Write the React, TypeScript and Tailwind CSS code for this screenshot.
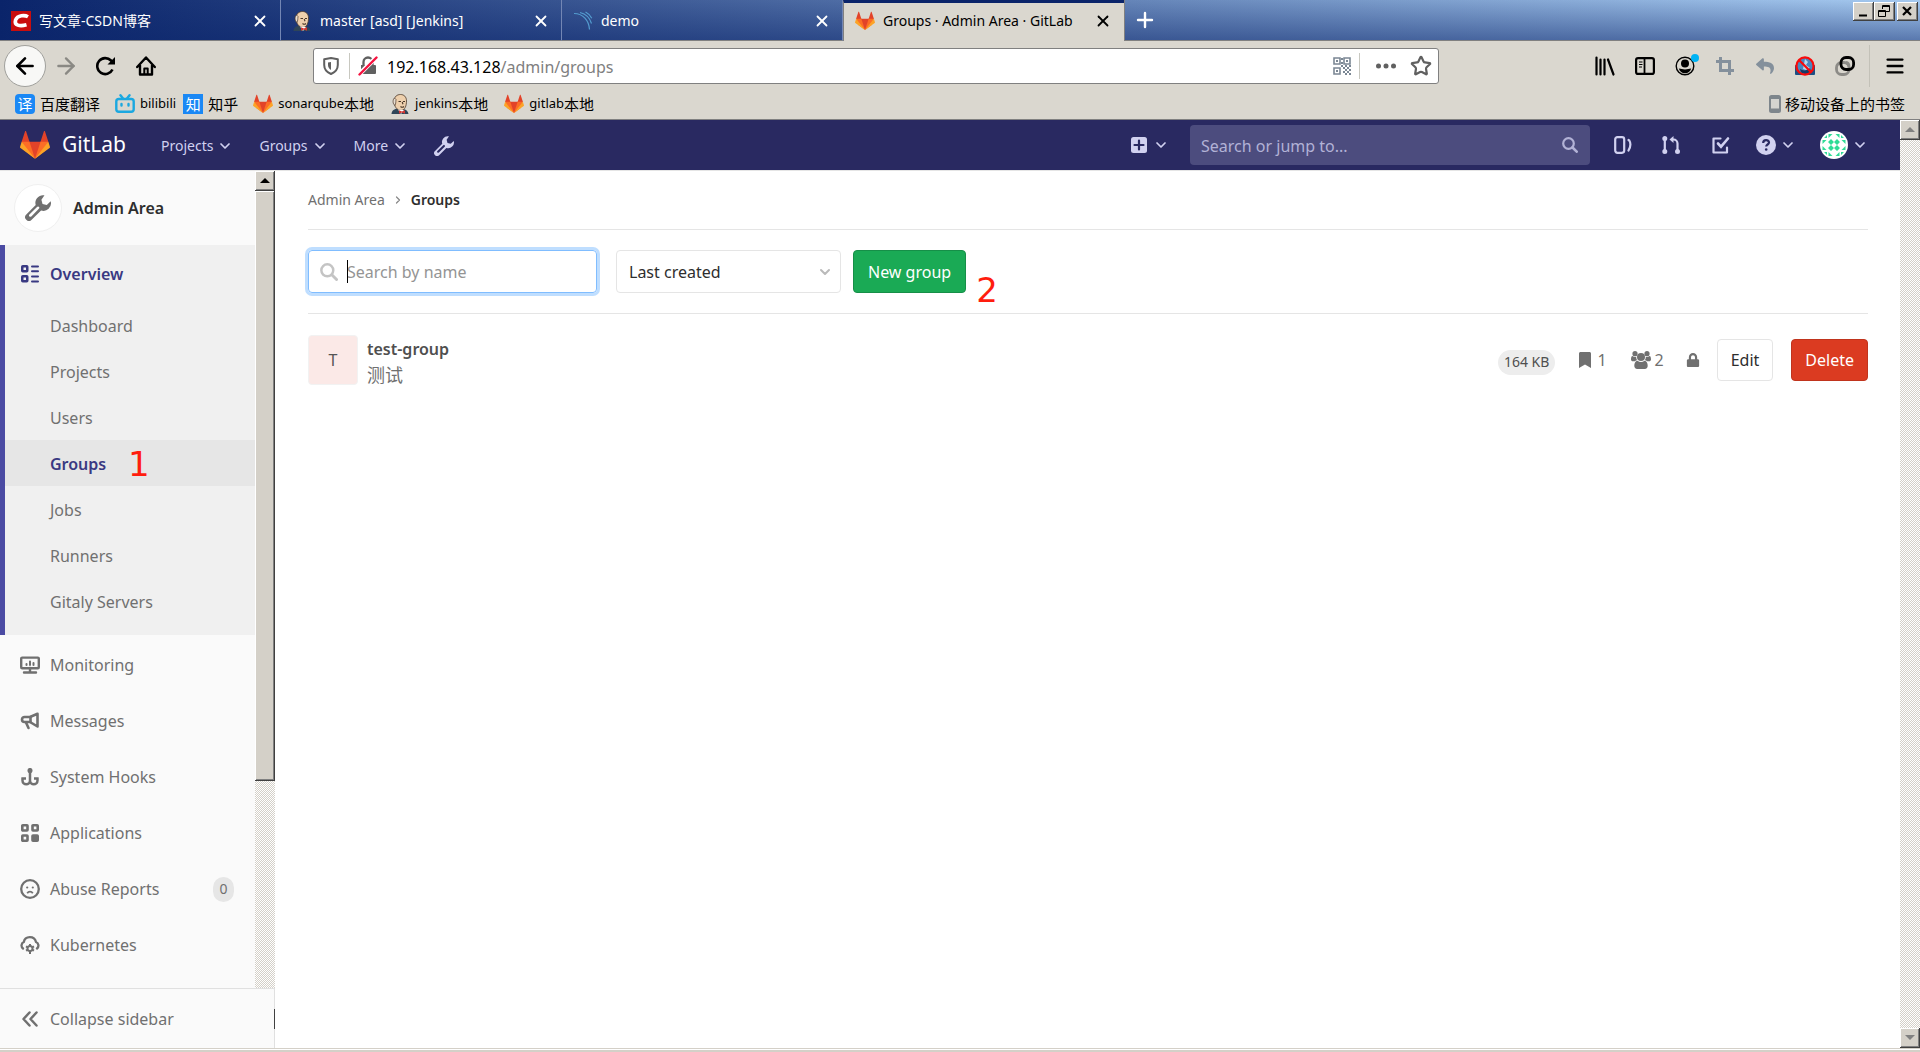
import type { ReactNode } from 'react';
import { ArrowLeft, ArrowRight, ChevronDown, ChevronRight, Menu, Plus, Star, X } from 'lucide-react';
import { FaBookmark, FaLock, FaReply } from 'react-icons/fa';

const OVERVIEW_LINKS = ['Dashboard', 'Projects', 'Users', 'Groups', 'Jobs', 'Runners', 'Gitaly Servers'];

const NAV_LINKS = ['Projects', 'Groups', 'More'];

function Tanuki({ className }: { className: string }) {
  return (
    <svg viewBox="0 0 36 36" className={className} preserveAspectRatio="none" aria-hidden="true">
      <path fill="#e24329" d="M2 14l9.38 9v-9l-4-12.28c-.205-.632-1.176-.632-1.38 0z" />
      <path fill="#e24329" d="M34 14l-9.38 9v-9l4-12.28c.205-.632 1.176-.632 1.38 0z" />
      <path fill="#e24329" d="M18 34.38L3 14h30z" />
      <path fill="#fc6d26" d="M18 34.38L11.38 14H2l4 11z" />
      <path fill="#fc6d26" d="M18 34.38L24.62 14H34l-4 11z" />
      <path fill="#fca326" d="M2 14L.1 20.16c-.18.565 0 1.2.5 1.56L18 34.38z" />
      <path fill="#fca326" d="M34 14l1.9 6.16c.18.565 0 1.2-.5 1.56L18 34.38z" />
    </svg>
  );
}

function JenkinsIcon() {
  return (
    <svg viewBox="0 0 20 20" className="size-5 shrink-0" aria-hidden="true">
      <path fill="#2f4558" d="M1.500 20c0-3 2.500-5 5.500-5.500l6 .5c3 .5 5 2 5.500 5z" />
      <path fill="#eed0ad" stroke="#4a3728" strokeWidth=".8" d="M4 6.500C4.500 2.500 7 .5 10.500.5s6 2.300 6 6.500c0 5-1.700 9-5 9.300C7.500 16.500 5 13.500 4.500 10z" />
      <path fill="#e6dcd0" stroke="#4a3728" strokeWidth=".7" d="M4.500 4C2.500 5.500 2.500 10 5 11.500c.8-1.500.8-3.500 1-6z" />
      <path fill="none" stroke="#4a3728" strokeWidth="1.100" d="M8.500 7.500h2.500M13 7.500h2M10.500 12.500c1 .8 2.500.8 3.500 0M12.200 8l.8 2.200" />
      <path fill="#fff" d="M8 15.500l3 4.500 3-4z" />
      <path fill="#d33833" d="M9 16.300l3 1.200 3-1.200v3.500l-3-1.200-3 1.200z" />
    </svg>
  );
}

function CsdnIcon() {
  return (
    <svg viewBox="0 0 20 20" className="size-5 shrink-0" aria-hidden="true">
      <rect width="20" height="20" fill="#c90d0d" />
      <path d="M17 5.700c-3-1.700-10.500-2-12.500 3.500-1.500 5 4 6.500 11 4.600" fill="none" stroke="#fff" strokeWidth="3.600" />
    </svg>
  );
}

function SonarIcon() {
  return (
    <svg viewBox="0 0 20 20" className="size-5 shrink-0" fill="none" stroke="#549dd0" strokeWidth="1.200" aria-hidden="true">
      <path d="M1 2.500c9 0 15 7 15.500 16" />
      <path d="M7 1.500c6 1.500 10 6 11.500 11" />
      <path d="M12.500 1c3 1.500 5 3.500 6.300 6.200" />
    </svg>
  );
}

function SearchIcon({ className }: { className: string }) {
  return (
    <svg viewBox="0 0 16 16" className={className} fill="none" stroke="currentColor" aria-hidden="true">
      <circle cx="6.500" cy="6.500" r="5.300" strokeWidth="2.200" />
      <path d="M10.500 10.500l4.200 4.200" strokeWidth="2.600" strokeLinecap="round" />
    </svg>
  );
}

function Wrench({ className }: { className: string }) {
  return (
    <svg viewBox="0 0 16 16" className={className} fill="currentColor" aria-hidden="true">
      <path
        fillRule="evenodd"
        d="M11.300.2a4.600 4.600 0 0 0-4.700 6L.8 12a2.300 2.300 0 0 0 3.300 3.300l5.800-5.800a4.600 4.600 0 0 0 5.900-5.600l-2.400 2.300-2.600-.6-.7-2.700L12 .2zM8.500 7.300a.8.800 0 0 1 0 1.200L3.900 13.200a.85.85 0 0 1-1.200-1.200l4.700-4.600a.8.800 0 0 1 1.100-.1z"
      />
    </svg>
  );
}

function OverviewIcon() {
  return (
    <svg viewBox="0 0 18 18" className="size-[18px]" fill="none" stroke="currentColor" strokeWidth="2.500" aria-hidden="true">
      <rect x="1.250" y="1.250" width="5" height="5" rx=".5" />
      <rect x="1.250" y="11.250" width="5" height="5" rx=".5" />
      <path strokeWidth="2" strokeLinecap="round" d="M11 1.500h6M11 6.200h6M11 11.500h6M11 16.500h6" />
    </svg>
  );
}

function MonitorIcon() {
  return (
    <svg viewBox="0 0 20 18" className="h-[18px] w-5" fill="none" stroke="currentColor" strokeWidth="2.400" aria-hidden="true">
      <rect x="1.200" y="1.600" width="17.600" height="10.600" rx="1" />
      <path d="M10 12v4M4 16.500h12" strokeLinecap="round" />
      <path d="M6.500 8v1M10 5.500v3.500M13.500 7v2" strokeWidth="2" strokeLinecap="round" />
    </svg>
  );
}

function MessagesIcon() {
  return (
    <svg viewBox="0 0 20 18" className="h-[18px] w-5" fill="none" stroke="currentColor" strokeWidth="2.600" strokeLinejoin="round" aria-hidden="true">
      <path d="M10 5H4.500a2.500 2.500 0 0 0 0 5H10l7.500 4.500V1.800z" />
      <path d="M10.500 5v5M6 10.500l2.500 5.500" strokeLinecap="round" />
    </svg>
  );
}

function HookIcon() {
  return (
    <svg viewBox="0 0 18 18" className="size-[18px]" fill="none" stroke="currentColor" strokeWidth="2.500" aria-hidden="true">
      <circle cx="9" cy="2.500" r="1.300" fill="currentColor" />
      <path d="M9 3v11M9 12.500c0 5-7.500 5-7.500 0V9.500M9 12.500c0 5 7.500 5 7.500 0V9.500M.5 10.500h4.500M13 10.500h4.500" />
    </svg>
  );
}

function AppsIcon() {
  return (
    <svg viewBox="0 0 18 18" className="size-[18px]" fill="none" stroke="currentColor" strokeWidth="2.600" aria-hidden="true">
      <rect x="1.300" y="1.300" width="5.200" height="5.200" rx=".5" />
      <rect x="11.500" y="1.300" width="5.200" height="5.200" rx=".5" />
      <rect x="1.300" y="11.500" width="5.200" height="5.200" rx=".5" />
      <rect x="11.500" y="11.500" width="5.200" height="5.200" rx=".5" fill="currentColor" />
    </svg>
  );
}

function AbuseIcon() {
  return (
    <svg viewBox="0 0 20 20" className="size-5" fill="none" stroke="currentColor" strokeWidth="2.300" aria-hidden="true">
      <circle cx="10" cy="10" r="8.800" />
      <path d="M7.200 14.300c1.400-2.200 4.200-2.200 5.600 0" strokeWidth="1.800" />
      <circle cx="7.200" cy="8.500" r="1.100" fill="currentColor" stroke="none" />
      <circle cx="12.800" cy="8.500" r="1.100" fill="currentColor" stroke="none" />
    </svg>
  );
}

function KubernetesIcon() {
  return (
    <svg viewBox="0 0 20 18" className="h-[18px] w-5" fill="none" stroke="currentColor" strokeWidth="2.300" aria-hidden="true">
      <path d="M3 12.500A3.800 3.800 0 0 1 3.800 6C5-.3 14.500-.5 16 6a3.800 3.800 0 0 1 1 6.500" strokeLinecap="round" />
      <circle cx="10" cy="12.500" r="2.500" strokeWidth="2" />
      <path strokeWidth="2" d="M10 8v2M10 15v3M6 10.300l1.800 1M14 10.300l-1.800 1M6 14.700l1.800-1M14 14.700l-1.800-1" />
    </svg>
  );
}

function MembersIcon() {
  return (
    <svg viewBox="0 0 20 18" className="h-[18px] w-5" fill="currentColor" aria-hidden="true">
      <circle cx="10" cy="6" r="4" />
      <path d="M6.500 9.800c1 .8 2.200 1.200 3.500 1.200s2.500-.4 3.500-1.200c2.300.2 3.200 2.500 3.200 5 0 2-1 3.200-3 3.200H6.300c-2 0-3-1.200-3-3.200 0-2.500.9-4.800 3.200-5z" />
      <circle cx="4" cy="2.700" r="2.600" />
      <circle cx="16" cy="2.700" r="2.600" />
      <path d="M1.500 5c1.300 1 2.500 1.100 3.700.7 0 1.500.3 2.600 1 3.500-1 .1-1.700.4-2.200 1H2C.8 10.200 0 9.600 0 8.400 0 6.800.4 5 1.500 5zM18.500 5c-1.300 1-2.500 1.100-3.700.7 0 1.500-.3 2.600-1 3.500 1 .1 1.700.4 2.200 1h2c1.200 0 2-.6 2-1.800 0-1.600-.4-3.400-1.500-3.400z" />
    </svg>
  );
}

const SIDEBAR_LINKS: { label: string; icon: ReactNode; badge?: string }[] = [
  { label: 'Monitoring', icon: <MonitorIcon /> },
  { label: 'Messages', icon: <MessagesIcon /> },
  { label: 'System Hooks', icon: <HookIcon /> },
  { label: 'Applications', icon: <AppsIcon /> },
  { label: 'Abuse Reports', icon: <AbuseIcon />, badge: '0' },
  { label: 'Kubernetes', icon: <KubernetesIcon /> },
];

const TABS: { title: string; icon: ReactNode; active?: boolean }[] = [
  { title: '写文章-CSDN博客', icon: <CsdnIcon /> },
  { title: 'master [asd] [Jenkins]', icon: <JenkinsIcon /> },
  { title: 'demo', icon: <SonarIcon /> },
  { title: 'Groups · Admin Area · GitLab', icon: <Tanuki className="size-5 shrink-0" />, active: true },
];

function TabStrip() {
  return (
    <div className="flex h-[41px] items-stretch bg-[linear-gradient(to_bottom,transparent,rgba(10,36,106,0.5)),linear-gradient(to_right,#0a246a,#a6caf0)]">
      {TABS.map((tab) => (
        <div
          key={tab.title}
          className={`flex w-[281px] items-center pl-[11px] text-sm ${
            tab.active
              ? 'border-l border-t-[3px] border-l-[#808080] border-t-[#0a246a] bg-[#dad7cf] pb-0.5 pr-[7px] text-black'
              : 'border-b border-r border-b-[#808080] border-r-[#7386b4] pr-1.5 pt-0.5 text-white'
          }`}
        >
          {tab.icon}
          <span className="ml-2 flex-1 truncate">{tab.title}</span>
          <button aria-label="Close tab" className="flex size-7 items-center justify-center">
            <X size={18} strokeWidth={2.4} />
          </button>
        </div>
      ))}
      <div className="flex flex-1 items-start border-b border-l border-[#808080]">
        <button aria-label="New tab" className="flex h-10 w-10 items-center justify-center text-white">
          <Plus size={24} strokeWidth={2.4} />
        </button>
        <div className="ml-auto mr-0.5 mt-0.5 flex text-black">
          <button aria-label="Minimize" className="flex h-[19px] w-[21px] items-center justify-center border-b border-r border-[#404040] bg-[#d4d0c8] shadow-[inset_1px_1px_0_#fff,inset_-1px_-1px_0_#808080]">
            <svg viewBox="0 0 12 12" className="size-3"><path d="M2 10.500h8" stroke="currentColor" strokeWidth="2" /></svg>
          </button>
          <button aria-label="Restore" className="flex h-[19px] w-[21px] items-center justify-center border-b border-r border-[#404040] bg-[#d4d0c8] shadow-[inset_1px_1px_0_#fff,inset_-1px_-1px_0_#808080]">
            <svg viewBox="0 0 12 12" className="size-3" fill="none" stroke="currentColor">
              <path d="M4.500 4V.5h7v6H8M4 1.500h8M.5 5.500h7v6h-7zM0 6.500h8" />
            </svg>
          </button>
          <button aria-label="Close" className="ml-0.5 flex h-[19px] w-[21px] items-center justify-center border-b border-r border-[#404040] bg-[#d4d0c8] shadow-[inset_1px_1px_0_#fff,inset_-1px_-1px_0_#808080]">
            <svg viewBox="0 0 12 12" className="size-3"><path d="M2 2l8 8M10 2l-8 8" stroke="currentColor" strokeWidth="2.200" /></svg>
          </button>
        </div>
      </div>
    </div>
  );
}

function UrlBar() {
  return (
    <div className="flex h-9 min-w-0 flex-1 items-center rounded-[3px] border border-[#808080] bg-white text-[#606060]">
      <svg viewBox="0 0 16 18" className="ml-[9px] h-[18px] w-4" fill="none" stroke="currentColor" strokeWidth="2" aria-hidden="true">
        <path d="M8 1l6.800 1.300V8c0 4.500-2.800 7.300-6.800 9-4-1.700-6.800-4.500-6.800-9V2.300z" strokeLinejoin="round" />
        <path d="M8 5v8c-2-1.300-3-3-3-5V5.500z" fill="currentColor" stroke="none" />
      </svg>
      <span className="ml-2.5 h-[26px] w-px bg-[#c8c8c0]" />
      <svg viewBox="0 0 20 20" className="ml-2 size-5" aria-hidden="true">
        <path fill="currentColor" d="M3 9h14a1 1 0 0 1 1 1v7a1 1 0 0 1-1 1H3z" />
        <path d="M5.500 9V6a4.500 4.500 0 0 1 9 0v3" fill="none" stroke="currentColor" strokeWidth="2.300" />
        <path d="M1 18.500L18.500 1" stroke="#fff" strokeWidth="4.500" />
        <path d="M1.500 18.500L18.500 1.500" stroke="#f5123f" strokeWidth="2.400" strokeLinecap="round" />
      </svg>
      <div className="ml-[9px] flex-1 pt-0.5 text-base text-[#808080]">
        <span className="text-black">192.168.43.128</span>/admin/groups
      </div>
      <svg viewBox="0 0 18 18" className="size-[18px]" fill="none" stroke="#7b8794" strokeWidth="1.600" aria-hidden="true">
        <path d="M1 1h6v6H1zM11 1h6v6h-6zM1 11h6v6H1z" />
        <path strokeWidth="2" d="M3 4h2M13 4h2M3 14h2M8 9h2M12 9h2M16 9h2M10 11h2M14 11h2M12 13h2M16 13h2M10 15h2M14 15h2M12 17h2M16 17h2M8 2h2M8 6h2" />
      </svg>
      <span className="ml-2 h-[26px] w-px bg-[#c8c8c0]" />
      <button aria-label="Page actions" className="ml-4 flex w-5 justify-center">
        <svg viewBox="0 0 20 6" className="h-1.5 w-5" fill="currentColor">
          <circle cx="2.500" cy="3" r="2.500" /><circle cx="10" cy="3" r="2.500" /><circle cx="17.500" cy="3" r="2.500" />
        </svg>
      </button>
      <button aria-label="Bookmark this page" className="ml-3.5 mr-1.5">
        <Star size={22} strokeWidth={2.4} />
      </button>
    </div>
  );
}

function Toolbar() {
  return (
    <div className="flex h-[50px] items-center bg-[#dad7cf] pl-1 text-black">
      <button aria-label="Back" className="flex size-[42px] items-center justify-center rounded-full border border-[#a0a09c] bg-[#f8f8f6]">
        <ArrowLeft size={26} strokeWidth={2.4} />
      </button>
      <button aria-label="Forward" className="flex w-10 justify-center text-[#8a8984]">
        <ArrowRight size={26} strokeWidth={2.2} />
      </button>
      <button aria-label="Reload" className="flex w-10 justify-center">
        <svg viewBox="0 0 20 20" className="size-5" fill="none" stroke="currentColor" strokeWidth="2.600">
          <path d="M16.500 13.500A8 8 0 1 1 15 4.500l1.500 2" />
          <path d="M19 1v7.500h-7.500z" fill="currentColor" stroke="none" />
        </svg>
      </button>
      <button aria-label="Home" className="flex w-10 justify-center">
        <svg viewBox="0 0 20 20" className="size-5" fill="none" stroke="currentColor" strokeWidth="2.400" strokeLinejoin="round" strokeLinecap="round">
          <path d="M1.200 11L10 1.500l8.800 9.500M4 9.500v9h12v-9" />
          <path d="M8.300 18v-5.500h3.400V18" strokeWidth="2" />
        </svg>
      </button>
      <div className="ml-[147px] flex min-w-0 flex-1">
        <UrlBar />
      </div>
      <div className="ml-[146px] flex items-center">
        <button aria-label="Library" className="flex w-10 justify-center">
          <svg viewBox="0 0 20 20" className="size-5" stroke="currentColor" strokeWidth="2.200" strokeLinecap="round">
            <path d="M1.500 1.500v17M5.500 3.500v15M9.500 3.500v15M13 3.500l5.500 15" />
          </svg>
        </button>
        <button aria-label="Sidebars" className="flex w-10 justify-center">
          <svg viewBox="0 0 20 18" className="h-[18px] w-5" fill="none" stroke="currentColor" strokeWidth="2.200">
            <rect x="1.100" y="1.100" width="17.800" height="15.800" rx="2" />
            <path d="M9.500 1v16" strokeWidth="1.800" />
            <path d="M4 5h3.500M4 7.500h3.500M4 10h3" strokeWidth="1.200" />
          </svg>
        </button>
        <button aria-label="Account" className="relative flex w-10 justify-center">
          <svg viewBox="0 0 20 20" className="size-5" fill="currentColor">
            <circle cx="10" cy="10" r="8.800" fill="none" stroke="currentColor" strokeWidth="1.400" />
            <circle cx="10" cy="7.500" r="4" />
            <path d="M3.800 12.500c2.500.2 3.500 1 6.200 1s3.700-.8 6.200-1c-.8 3-3.200 4.700-6.200 4.700s-5.400-1.700-6.200-4.700z" />
          </svg>
          <span className="absolute -top-0.5 right-1.5 size-2 rounded-full bg-[#00b3f4]" />
        </button>
        <button aria-label="Crop" className="flex w-10 justify-center text-[#84909c]">
          <svg viewBox="0 0 20 20" className="size-5" fill="none" stroke="currentColor" strokeWidth="3">
            <path d="M5.500 1v13.500H19M1 5.500h13.500V19" />
          </svg>
        </button>
        <button aria-label="Undo" className="flex w-10 justify-center text-[#84909c]">
          <FaReply size={18} />
        </button>
        <button aria-label="Blocked images" className="flex w-10 justify-center">
          <svg viewBox="0 0 20 20" className="size-5">
            <rect y="9" width="20" height="10" rx="1" fill="#1d4f84" />
            <circle cx="10" cy="10" r="8.600" fill="#4a86bd" />
            <path d="M5 13c3 2 7 2 10-1l1 4-5 2.500-5-2z" fill="#173a66" />
            <path d="M10 3l3 3-2 3 4 3-4 2-3-1z" fill="#b9d8ec" />
            <circle cx="10" cy="10" r="8.600" fill="none" stroke="#fa0a0a" strokeWidth="2.200" />
            <path d="M4 4l12 12" stroke="#fa0a0a" strokeWidth="2.200" />
          </svg>
        </button>
        <button aria-label="Copy links" className="flex w-10 justify-center">
          <svg viewBox="0 0 20 20" className="size-5" fill="none" strokeWidth="2.800">
            <rect x="1.500" y="6.500" width="12.500" height="12" rx="5" stroke="#8c8b87" />
            <rect x="6" y="1.500" width="12.600" height="12" rx="5" stroke="currentColor" />
            <path d="M14 10.500c0-2.500-1-3.700-3-4" stroke="#8c8b87" />
          </svg>
        </button>
        <span className="ml-1 h-[42px] w-px bg-[#c3c1b8]" />
        <button aria-label="Open menu" className="flex w-[50px] justify-center">
          <Menu size={22} strokeWidth={2.6} />
        </button>
      </div>
    </div>
  );
}

function Bookmarks() {
  return (
    <div className="flex h-[29px] items-center border-b border-[#808080] bg-[#dad7cf] pb-0.5 pl-[15px] pr-[15px] text-[13px] text-black">
      <a href="#" className="flex items-center text-[15px]">
        <span className="mr-[5px] flex size-5 items-center justify-center rounded-sm bg-[#1a88f5] text-white">译</span>
        百度翻译
      </a>
      <a href="#" className="ml-[15px] flex items-center">
        <svg viewBox="0 0 20 20" className="mr-[5px] size-5" fill="none" stroke="#1ba8e0" strokeWidth="2.400" strokeLinecap="round" aria-hidden="true">
          <rect x="1.300" y="5" width="17.400" height="12.800" rx="2.500" />
          <path d="M5.500 1.300L8 4.500M14.500 1.300L12 4.500M6.500 10v1.500M13.500 10v1.500" />
        </svg>
        bilibili
      </a>
      <a href="#" className="ml-[7px] flex items-center text-[15px]">
        <span className="mr-[5px] flex size-5 items-center justify-center bg-[#1a88f5] text-white">知</span>
        知乎
      </a>
      <a href="#" className="ml-[15px] flex items-center">
        <Tanuki className="mr-[5px] size-5" />
        sonarqube<span className="text-[15px]">本地</span>
      </a>
      <a href="#" className="ml-4 flex items-center">
        <span className="mr-[5px]"><JenkinsIcon /></span>
        jenkins<span className="text-[15px]">本地</span>
      </a>
      <a href="#" className="ml-4 flex items-center">
        <Tanuki className="mr-[5px] size-5" />
        gitlab<span className="text-[15px]">本地</span>
      </a>
      <a href="#" className="ml-auto flex items-center text-[15px]">
        <svg viewBox="0 0 12 18" className="mr-1 h-[18px] w-3" fill="none" stroke="#7e868c" aria-hidden="true">
          <rect x="1" y="1" width="10" height="16" rx="1.500" strokeWidth="2" fill="#d4d4d0" />
          <path d="M1 2.500h10M1 15h10" strokeWidth="3" />
        </svg>
        移动设备上的书签
      </a>
    </div>
  );
}

function Navbar() {
  return (
    <header className="flex h-[50px] items-center bg-[#292961] pl-5 text-[#d1d1f0]">
      <a href="#" className="flex items-center text-[21px] text-white">
        <Tanuki className="mr-3 h-[30px] w-[30px]" />
        GitLab
      </a>
      <nav className="ml-[35px] flex items-center gap-[26px] pt-px text-sm">
        {NAV_LINKS.map((label) => (
          <a key={label} href="#" className="flex items-center gap-1">
            {label}
            <ChevronDown size={16} strokeWidth={2.6} />
          </a>
        ))}
        <a href="#" aria-label="Admin Area">
          <Wrench className="size-5" />
        </a>
      </nav>
      <button aria-label="New" className="ml-auto flex items-center gap-1.5">
        <svg viewBox="0 0 16 16" className="size-4">
          <rect width="16" height="16" rx="2.500" fill="currentColor" />
          <path d="M8 3.500v9M3.500 8h9" stroke="#292961" strokeWidth="2.200" strokeLinecap="round" />
        </svg>
        <ChevronDown size={16} strokeWidth={2.6} />
      </button>
      <div className="ml-[21px] flex h-10 w-[400px] items-center rounded bg-[#4c4c7e] pl-[11px] pr-3">
        <input
          aria-label="Search or jump to"
          placeholder="Search or jump to..."
          className="min-w-0 flex-1 bg-transparent pt-0.5 text-base outline-none placeholder:text-[#b2b2d6]"
        />
        <SearchIcon className="size-4 text-[#b2b2d6]" />
      </div>
      <a href="#" aria-label="Issues" className="ml-6">
        <svg viewBox="0 0 18 18" className="size-[18px]" fill="none" stroke="currentColor" strokeWidth="2.200" strokeLinecap="round">
          <rect x="1.200" y="1.200" width="9" height="15.600" rx="2.200" />
          <path d="M14.500 4l.8.500c1.500 2.500 1.200 6.500-.8 10" />
        </svg>
      </a>
      <a href="#" aria-label="Merge requests" className="ml-[30px]">
        <svg viewBox="0 0 18 18" className="size-[18px]" fill="none" stroke="currentColor" strokeWidth="2.200">
          <path d="M2.800 2v14M9.500 3.500h2a4 4 0 0 1 4 4V16" />
          <path d="M11.500 0v7L7.500 3.500z" fill="currentColor" stroke="none" />
          <circle cx="2.800" cy="2.600" r="1.400" fill="currentColor" />
          <circle cx="2.800" cy="15.400" r="1.400" fill="currentColor" />
          <circle cx="15.500" cy="15.400" r="1.400" fill="currentColor" />
        </svg>
      </a>
      <a href="#" aria-label="Todos" className="ml-8">
        <svg viewBox="0 0 18 18" className="size-[18px]" fill="none" stroke="currentColor" strokeWidth="2.200" strokeLinecap="round">
          <path d="M8.500 2.500H1.500v14h13.500V11.500" strokeLinejoin="round" />
          <path d="M6 7.500l3 3.200L16 2.500" strokeWidth="2.600" />
        </svg>
      </a>
      <button aria-label="Help" className="ml-[26px] flex items-center gap-1">
        <svg viewBox="0 0 20 20" className="size-5">
          <circle cx="10" cy="10" r="10" fill="currentColor" />
          <path d="M7.200 8c0-3.800 5.800-3.600 5.800-.5 0 2-2.800 2-2.800 4" fill="none" stroke="#292961" strokeWidth="2.200" />
          <circle cx="10.200" cy="14.500" r="1.300" fill="#292961" />
        </svg>
        <ChevronDown size={16} strokeWidth={2.6} />
      </button>
      <button aria-label="User menu" className="ml-6 mr-8 flex items-center gap-1">
        <svg viewBox="0 0 28 28" className="size-7">
          <circle cx="14" cy="14" r="14" fill="#fff" />
          <g fill="#2fdc97">
            <path d="M11 8l3 3-3 3-3-3zM17 8l3 3-3 3-3-3zM11 14l3 3-3 3-3-3zM17 14l3 3-3 3-3-3z" />
            <path d="M8.500 3h4l-4 4zM19.500 3h-4l4 4zM8.500 25h4l-4-4zM19.500 25h-4l4-4zM2.500 9v4l4-4zM2.500 19v-4l4 4zM25.500 9v4l-4-4zM25.500 19v-4l-4 4z" />
            <path d="M4 7l3-3v3zM24 7l-3-3v3zM4 21l3 3v-3zM24 21l-3 3v-3z" />
          </g>
        </svg>
        <ChevronDown size={16} strokeWidth={2.6} />
      </button>
    </header>
  );
}

function Sidebar() {
  return (
    <aside className="flex w-[275px] shrink-0 flex-col bg-[#fafafa] text-[#707070]">
      <div className="flex min-h-0 flex-1">
        <div className="min-w-0 flex-1 overflow-hidden text-base">
          <a href="#" className="flex h-[74px] items-center pl-3.5 font-semibold text-[#2e2e2e]">
            <span className="mr-[11px] flex size-12 items-center justify-center rounded-full border border-[#f0f0f0] bg-white text-[#707070]">
              <Wrench className="size-[26px]" />
            </span>
            Admin Area
          </a>
          <div className="border-l-[5px] border-[#4b4ba3] bg-[#f0f0f0] pb-[11px]">
            <a href="#" className="flex h-[57px] items-center pl-4 font-semibold text-[#393982]">
              <span className="mr-[11px] flex w-[18px] justify-center"><OverviewIcon /></span>
              Overview
            </a>
            <ul>
              {OVERVIEW_LINKS.map((label) => (
                <li key={label} className="relative">
                  <a
                    href="#"
                    className={`flex h-[46px] items-center pl-[45px] pt-0.5 ${
                      label === 'Groups' ? 'bg-[#e6e6e6] font-semibold text-[#393982]' : ''
                    }`}
                  >
                    {label}
                  </a>
                  {label === 'Groups' && (
                    <span className="absolute left-[123px] top-px text-[34px] leading-[46px] text-[#ff1d0e] [font-family:'DejaVu_Sans',sans-serif]">1</span>
                  )}
                </li>
              ))}
            </ul>
          </div>
          <ul className="pt-0.5">
            {SIDEBAR_LINKS.map((link) => (
              <li key={link.label}>
                <a href="#" className="flex h-14 items-center pl-5 pr-[21px]">
                  <span className="mr-2.5 flex w-5 justify-center">{link.icon}</span>
                  {link.label}
                  {link.badge && (
                    <span className="ml-auto flex h-[25px] w-[21px] items-center justify-center rounded-full bg-[#e6e6e6] text-sm">
                      {link.badge}
                    </span>
                  )}
                </a>
              </li>
            ))}
          </ul>
        </div>
        {/* Classic scrollbar */}
        <div className="flex w-5 flex-col bg-[repeating-conic-gradient(#d4d0c8_0_25%,#fff_0_50%)] bg-[size:2px_2px]">
          <div className="flex h-5 items-center justify-center border-b border-r border-[#404040] bg-[#d4d0c8] shadow-[inset_1px_1px_0_#fff,inset_-1px_-1px_0_#808080]">
            <svg viewBox="0 0 10 5" className="h-[5px] w-2.5"><path d="M0 5l5-5 5 5z" /></svg>
          </div>
          <div className="flex-[74] border-b border-r border-[#404040] bg-[#d4d0c8] shadow-[inset_1px_1px_0_#fff,inset_-1px_-1px_0_#808080]" />
          <div className="flex-[26]" />
        </div>
      </div>
      <button className="relative flex h-[60px] items-center border-r border-t border-[#e0e0e0] pl-[22px] text-base">
        <svg viewBox="0 0 16 16" className="mr-3 size-4" fill="none" stroke="currentColor" strokeWidth="2.500" strokeLinecap="round" strokeLinejoin="round">
          <path d="M7.500 1.500L1.500 8l6 6.500M14.500 1.500L8.500 8l6 6.500" />
        </svg>
        Collapse sidebar
        {/* Edge of the scrollbar's lower arrow */}
        <span className="absolute -right-px top-5 h-5 w-px bg-[#404040]" />
      </button>
    </aside>
  );
}

function GroupsPage() {
  return (
    <main className="min-w-0 flex-1 bg-white pl-[33px] pr-8 text-base text-[#2e2e2e]">
      <nav className="flex h-[59px] items-center border-b border-[#e5e5e5] text-sm">
        <a href="#" className="text-[#707070]">Admin Area</a>
        <ChevronRight size={12} strokeWidth={2.4} className="mx-[7px] text-[#868686]" />
        <a href="#" className="font-semibold">Groups</a>
      </nav>

      <form className="flex h-[84px] items-center border-b border-[#e5e5e5]">
        <div className="relative flex h-[43px] w-[289px] items-center rounded border border-[#80bdff] pl-[11px] ring-[3px] ring-[#bfdeff]">
          <SearchIcon className="size-[18px] text-[#c4c4c4]" />
          <input
            aria-label="Search by name"
            placeholder="Search by name"
            className="ml-[9px] min-w-0 flex-1 bg-transparent outline-none placeholder:text-[#949494]"
          />
          <span className="absolute left-[38px] top-[9px] h-[23px] w-px bg-black" />
        </div>
        <div className="relative ml-[19px] w-[225px]">
          <select aria-label="Sort by" className="h-[43px] w-full appearance-none rounded border border-[#e5e5e5] bg-white pl-3 pr-8">
            <option>Last created</option>
          </select>
          <ChevronDown size={16} strokeWidth={3} className="pointer-events-none absolute right-2 top-3.5 text-[#bababa]" />
        </div>
        <div className="relative ml-3">
          <button type="button" className="h-[43px] whitespace-nowrap rounded border border-[#168f48] bg-[#1aaa55] px-3.5 text-white">
            New group
          </button>
          <span className="absolute left-full top-full -mt-[26px] ml-2.5 text-[34px] leading-[46px] text-[#ff1d0e] [font-family:'DejaVu_Sans',sans-serif]">2</span>
        </div>
      </form>

      <ul>
        <li className="flex items-center pt-[18px]">
          <span className="flex size-[50px] items-center justify-center rounded border border-[#f2f2f2] bg-[#fbe9e7] text-[#555]">T</span>
          <div className="ml-[9px] pt-1">
            <a href="#" className="block leading-[26px] font-semibold text-[#4f4f4f]">test-group</a>
            <p className="text-lg leading-[26px] text-[#707070]">测试</p>
          </div>
          <div className="ml-auto flex items-center text-[#707070]">
            <span className="mr-[22px] mt-1 flex h-[25px] items-center rounded-full bg-[#ededed] px-1.5 text-sm text-[#4f4f4f]">164 KB</span>
            <span className="flex items-center gap-1">
              <FaBookmark size={16} />
              1
            </span>
            <span className="ml-6 flex items-center gap-1">
              <MembersIcon />
              2
            </span>
            <FaLock size={14} className="ml-[22px]" />
            <button className="ml-[17px] h-[42px] rounded border border-[#e5e5e5] px-[13px] text-[#2e2e2e]">Edit</button>
            <button className="ml-[18px] h-[42px] rounded border border-[#c0341d] bg-[#db3b21] px-[13px] text-white">Delete</button>
          </div>
        </li>
      </ul>
    </main>
  );
}

export default function App() {
  return (
    <div className="flex h-screen flex-col overflow-hidden [font-family:'Noto_Sans','Noto_Sans_CJK_SC',sans-serif]">
      <TabStrip />
      <Toolbar />
      <Bookmarks />
      <div className="flex min-h-0 flex-1">
        <div className="flex min-w-0 flex-1 flex-col">
          <Navbar />
          <div className="flex min-h-0 flex-1 border-t border-[#e5e5e5]">
            <Sidebar />
            <GroupsPage />
          </div>
        </div>
        {/* Page scrollbar, nothing to scroll */}
        <div className="flex w-5 flex-col justify-between bg-[repeating-conic-gradient(#d4d0c8_0_25%,#fff_0_50%)] bg-[size:2px_2px]">
          <div className="flex h-5 items-center justify-center border-b border-r border-[#404040] bg-[#d4d0c8] shadow-[inset_1px_1px_0_#fff,inset_-1px_-1px_0_#808080]">
            <svg viewBox="0 0 10 5" className="h-[5px] w-2.5" fill="#808080"><path d="M0 5l5-5 5 5z" /></svg>
          </div>
          <div className="flex h-5 items-center justify-center border-b border-r border-[#404040] bg-[#d4d0c8] shadow-[inset_1px_1px_0_#fff,inset_-1px_-1px_0_#808080]">
            <svg viewBox="0 0 10 5" className="h-[5px] w-2.5" fill="#808080"><path d="M0 0l5 5 5-5z" /></svg>
          </div>
        </div>
      </div>
      <div className="h-1 border-t border-[#d4d0c8] bg-[#d4d0c8] shadow-[inset_0_1px_0_#fff]" />
    </div>
  );
}
